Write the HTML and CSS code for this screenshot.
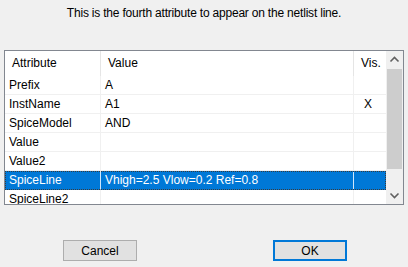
FILE: index.html
```html
<!DOCTYPE html>
<html lang="en">
<head>
    <meta charset="UTF-8">
    <title>Attribute Editor</title>
    <link rel="stylesheet" href="styles.css">
</head>
<body>
    <div class="dialog">
        <p class="hint">This is the fourth attribute to appear on the netlist line.</p>

        <div class="grid">
            <div class="rows">
                <div class="row head">
                    <div class="cell">Attribute</div>
                    <div class="cell">Value</div>
                    <div class="cell">Vis.</div>
                </div>
                <div class="row">
                    <div class="cell">Prefix</div>
                    <div class="cell">A</div>
                    <div class="cell"></div>
                </div>
                <div class="row">
                    <div class="cell">InstName</div>
                    <div class="cell">A1</div>
                    <div class="cell vis">X</div>
                </div>
                <div class="row">
                    <div class="cell">SpiceModel</div>
                    <div class="cell">AND</div>
                    <div class="cell"></div>
                </div>
                <div class="row">
                    <div class="cell">Value</div>
                    <div class="cell"></div>
                    <div class="cell"></div>
                </div>
                <div class="row">
                    <div class="cell">Value2</div>
                    <div class="cell"></div>
                    <div class="cell"></div>
                </div>
                <div class="row selected">
                    <div class="cell">SpiceLine</div>
                    <div class="cell">Vhigh=2.5 Vlow=0.2 Ref=0.8</div>
                    <div class="cell"></div>
                </div>
                <div class="row">
                    <div class="cell">SpiceLine2</div>
                    <div class="cell"></div>
                    <div class="cell"></div>
                </div>
            </div>

            <div class="scrollbar">
                <svg class="arrow" width="17" height="17" viewBox="0 0 17 17">
                    <path d="M4.5 10.5 L8.5 6.5 L12.5 10.5" fill="none" stroke="#606060" stroke-width="1.6"/>
                </svg>
                <div class="track">
                    <div class="thumb"></div>
                </div>
                <svg class="arrow" width="17" height="17" viewBox="0 0 17 17">
                    <path d="M4.5 6.5 L8.5 10.5 L12.5 6.5" fill="none" stroke="#606060" stroke-width="1.6"/>
                </svg>
            </div>
        </div>

        <div class="buttons">
            <button class="btn">Cancel</button>
            <button class="btn default">OK</button>
        </div>
    </div>
</body>
</html>
```

FILE: styles.css
```css
body {
    margin: 0;
    background: #f0f0f0;
    font-family: "Liberation Sans", Arial, sans-serif;
    font-size: 12px;
    color: #000;
}

.dialog {
    width: 408px;
    height: 267px;
    overflow: hidden;
}

.hint {
    margin: 0;
    padding-top: 6px;
    height: 15px;
    line-height: 15px;
    text-align: center;
    letter-spacing: -0.2px;
}

.grid {
    display: flex;
    margin: 29px 0 0 4px;
    width: 398px;
    height: 153px;
    border: 1px solid #828790;
    background: white;
}

.rows {
    width: 381px;
    overflow: hidden;
}

.row {
    display: grid;
    grid-template-columns: 96px 253px 32px;
    height: 19px;
    line-height: 18px;
}

.row .cell {
    padding-left: 4px;
    border-right: 1px solid #f0f0f0;
    border-bottom: 1px solid #f0f0f0;
    white-space: nowrap;
    overflow: hidden;
}

.row .cell:last-child {
    border-right: none;
}

.row.head {
    height: 25px;
    line-height: 25px;
}

.row.head .cell {
    padding-left: 7px;
    border-bottom: none;
    border-right-color: #e5e5e5;
}

.row .cell.vis {
    padding-left: 10px;
}

.row.selected {
    background: #0078d7;
    color: white;
    outline: 1px dotted #3a3a3a;
    outline-offset: -1px;
}

.row.selected .cell {
    border-bottom-color: #0078d7;
    border-right-color: #cfe6fb;
}

.scrollbar {
    width: 17px;
    display: flex;
    flex-direction: column;
    background: #f0f0f0;
}

.arrow {
    display: block;
    flex: none;
}

.track {
    flex: 1;
}

.thumb {
    height: 100px;
    margin: 1px 1px 0 1px;
    background: #cdcdcd;
}

.buttons {
    display: flex;
    gap: 136px;
    margin: 35px 0 0 63px;
}

.btn {
    width: 74px;
    height: 21px;
    padding: 0;
    background: #e1e1e1;
    border: 1px solid #adadad;
    font-family: inherit;
    font-size: 12px;
    color: #000;
}

.btn.default {
    border: 2px solid #0078d7;
}
```
